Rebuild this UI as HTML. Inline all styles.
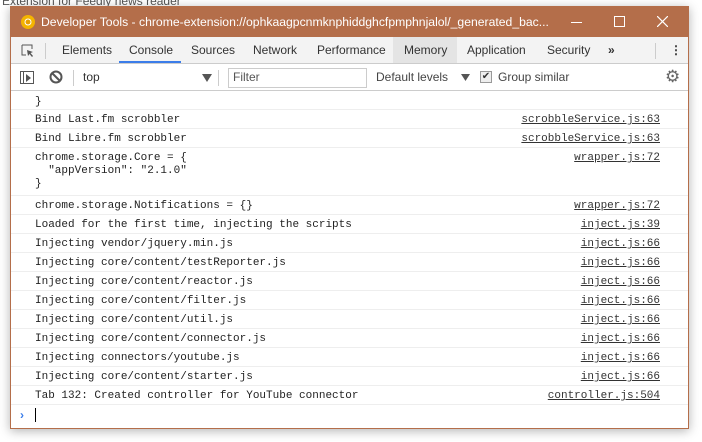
<!DOCTYPE html>
<html><head><style>
*{margin:0;padding:0;box-sizing:border-box}
body{width:702px;height:442px;overflow:hidden;background:#fff;font-family:"Liberation Sans",sans-serif;position:relative}
.bg{position:absolute;font-size:12px;color:#555}
.win{position:absolute;left:10px;top:6px;width:679px;height:423px;border:1px solid #b46e4a;background:#fff;box-shadow:0 2px 10px rgba(0,0,0,.3)}
.title{position:absolute;left:0;top:0;width:677px;height:30px;background:#b46e4a;color:#fff;font-size:12px;line-height:30px}
.tabs{position:absolute;left:0;top:30px;width:677px;height:27px;background:#f3f3f3;border-bottom:1px solid #ccc;font-size:12px;color:#333}
.tabs span{position:absolute;top:0;line-height:27px}
.bar{position:absolute;left:0;top:57px;width:677px;height:27px;background:#fff;border-bottom:1px solid #ccc;font-size:12px;color:#333}
.row{position:absolute;left:0;width:677px;border-bottom:1px solid #eee;font-family:"Liberation Mono",monospace;font-size:11px;color:#222;line-height:13px;padding:4px 0 0 24px;white-space:pre}
.src{position:absolute;right:28px;top:4px;text-decoration:underline;color:#333}
</style></head><body>
<div class="bg" style="left:2px;top:-6px">Extension for Feedly news reader</div>
<div class="win">
<div class="title">
<svg style="position:absolute;left:10px;top:8px" width="14" height="14"><circle cx="7" cy="7" r="7" fill="#f4b400"/><circle cx="7" cy="7" r="3.5" fill="#fff"/><circle cx="7" cy="7" r="2.5" fill="#e8a000"/></svg>
<span style="position:absolute;left:30px;font-size:12.2px">Developer Tools - chrome-extension://ophkaagpcnmknphiddghcfpmphnjalol/_generated_bac...</span>
<div style="position:absolute;left:560px;top:15px;width:11px;height:1px;background:#fff"></div>
<div style="position:absolute;left:603px;top:9px;width:11px;height:11px;border:1px solid #fff"></div>
<svg style="position:absolute;left:646px;top:9px" width="11" height="11"><path d="M0 0L11 11M11 0L0 11" stroke="#fff" stroke-width="1.2"/></svg>
</div>
<div class="tabs">
<svg style="position:absolute;left:10px;top:7px" width="14" height="14"><path d="M1 1h10v4M1 1v10h4" fill="none" stroke="#555"/><path d="M6 6l6 2-2.5 1 2.5 3-1 1-2.5-3L7 12z" fill="#555"/></svg>
<div style="position:absolute;left:34px;top:6px;width:1px;height:16px;background:#ccc"></div>
<span style="left:51px">Elements</span>
<span style="left:118px">Console</span>
<div style="position:absolute;left:108px;top:24px;width:62px;height:2px;background:#3b7de9"></div>
<span style="left:180px">Sources</span>
<span style="left:242px">Network</span>
<span style="left:306px">Performance</span>
<div style="position:absolute;left:382px;top:0;width:64px;height:26px;background:#e4e4e4"></div>
<span style="left:393px">Memory</span>
<span style="left:456px">Application</span>
<span style="left:536px">Security</span>
<span style="left:597px;font-weight:bold">»</span>
<div style="position:absolute;left:644px;top:6px;width:1px;height:16px;background:#ccc"></div>
<span style="left:659px;font-weight:bold;line-height:26px">⋮</span>
</div>
<div class="bar">
<div style="position:absolute;left:9px;top:7px;width:14px;height:13px;border:1px solid #555"></div>
<div style="position:absolute;left:12px;top:8px;width:1px;height:11px;background:#555"></div>
<svg style="position:absolute;left:15px;top:10px" width="6" height="8"><path d="M0 0l5 4-5 4z" fill="#555"/></svg>
<svg style="position:absolute;left:38px;top:6px" width="14" height="14"><circle cx="7" cy="7" r="5.5" fill="none" stroke="#555" stroke-width="2"/><path d="M3 3l8 8" stroke="#555" stroke-width="2"/></svg>
<div style="position:absolute;left:62px;top:6px;width:1px;height:16px;background:#ccc"></div>
<span style="position:absolute;left:72px;top:6px">top</span>
<svg style="position:absolute;left:191px;top:10px" width="10" height="8"><path d="M0 0h10L5 8z" fill="#555"/></svg>
<div style="position:absolute;left:207px;top:6px;width:1px;height:16px;background:#ccc"></div>
<div style="position:absolute;left:217px;top:4px;width:139px;height:20px;border:1px solid #ccc"></div>
<span style="position:absolute;left:222px;top:6px;color:#555">Filter</span>
<span style="position:absolute;left:365px;top:6px;color:#444">Default levels</span>
<svg style="position:absolute;left:450px;top:10px" width="9" height="7"><path d="M0 0h9L4.5 7z" fill="#555"/></svg>
<div style="position:absolute;left:469px;top:7px;width:12px;height:12px;border:1px solid #999;background:#eee;font-size:10px;line-height:10px;text-align:center">✔</div>
<span style="position:absolute;left:487px;top:6px;color:#444">Group similar</span>
<span style="position:absolute;left:654px;top:3px;font-size:17px;color:#666">⚙</span>
</div>
<div class="row" style="top:84px;height:19px;padding-top:5px">}</div>
<div class="row" style="top:103px;height:19px">Bind Last.fm scrobbler<span class="src">scrobbleService.js:63</span></div>
<div class="row" style="top:122px;height:19px">Bind Libre.fm scrobbler<span class="src">scrobbleService.js:63</span></div>
<div class="row" style="top:141px;height:48px">chrome.storage.Core = {
  "appVersion": "2.1.0"
}<span class="src">wrapper.js:72</span></div>
<div class="row" style="top:189px;height:19px">chrome.storage.Notifications = {}<span class="src">wrapper.js:72</span></div>
<div class="row" style="top:208px;height:19px">Loaded for the first time, injecting the scripts<span class="src">inject.js:39</span></div>
<div class="row" style="top:227px;height:19px">Injecting vendor/jquery.min.js<span class="src">inject.js:66</span></div>
<div class="row" style="top:246px;height:19px">Injecting core/content/testReporter.js<span class="src">inject.js:66</span></div>
<div class="row" style="top:265px;height:19px">Injecting core/content/reactor.js<span class="src">inject.js:66</span></div>
<div class="row" style="top:284px;height:19px">Injecting core/content/filter.js<span class="src">inject.js:66</span></div>
<div class="row" style="top:303px;height:19px">Injecting core/content/util.js<span class="src">inject.js:66</span></div>
<div class="row" style="top:322px;height:19px">Injecting core/content/connector.js<span class="src">inject.js:66</span></div>
<div class="row" style="top:341px;height:19px">Injecting connectors/youtube.js<span class="src">inject.js:66</span></div>
<div class="row" style="top:360px;height:19px">Injecting core/content/starter.js<span class="src">inject.js:66</span></div>
<div class="row" style="top:379px;height:19px">Tab 132: Created controller for YouTube connector<span class="src">controller.js:504</span></div>
<div style="position:absolute;left:9px;top:401px;color:#3b7de9;font-size:12px;font-weight:bold">›</div>
<div style="position:absolute;left:24px;top:401px;width:1px;height:14px;background:#000"></div>
</div>
</body></html>
